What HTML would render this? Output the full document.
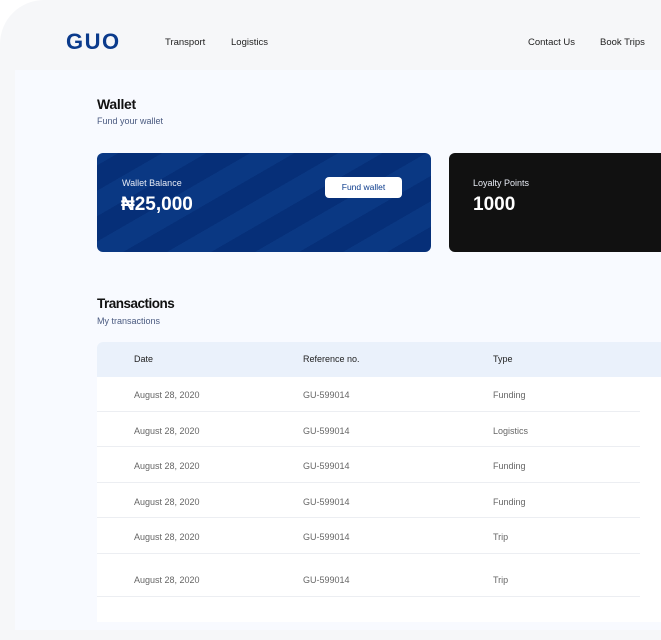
<!DOCTYPE html>
<html><head><style>
*{margin:0;padding:0;box-sizing:border-box}
body{width:661px;height:606px;overflow:hidden;background:#fff;font-family:"Liberation Sans",sans-serif;position:relative}
.outer{position:absolute;left:0;top:0;width:700px;height:640px;background:#f6f7f9;border-top-left-radius:44px}
.main{position:absolute;left:15px;top:70px;width:660px;height:560px;background:#f8faff}
.abs{position:absolute;white-space:nowrap}
.logo{left:66px;top:29px;font-size:22px;font-weight:bold;color:#0b3b8c;letter-spacing:1.5px}
.nav{top:37px;font-size:9.5px;color:#222}
.card{position:absolute;top:153px;height:99px;border-radius:6px}
.blue{left:97px;width:334px;background:repeating-linear-gradient(-30deg,#062f78 0 22px,#0a3883 22px 44px)}
.black{left:449px;width:230px;background:#111}
.lbl{font-size:9px;color:#e8ecf5}
.big{font-size:19px;font-weight:bold;color:#fff}
.btn{left:228px;top:24px;width:77px;height:21px;background:#fff;border-radius:4px;font-size:8.5px;color:#0b3b8c;text-align:center;line-height:21px}
.table{position:absolute;left:97px;top:342px;width:600px;height:280px;background:#fff;border-top-left-radius:6px}
.head{position:absolute;left:0;top:0;width:600px;height:35px;background:#eaf1fb;border-top-left-radius:6px}
.cell{position:absolute;font-size:9px;color:#666}
.hc{color:#222}
.sep{position:absolute;left:0;width:543px;height:1px;background:#eceef2}
</style></head><body>
<div class="outer"></div>
<div class="main"></div>
<div class="abs logo">GUO</div>
<div class="abs nav" style="left:165px">Transport</div>
<div class="abs nav" style="left:231px">Logistics</div>
<div class="abs nav" style="left:528px">Contact Us</div>
<div class="abs nav" style="left:600px">Book Trips</div>
<div class="abs" style="left:97px;top:96px;font-size:14px;font-weight:bold;color:#111;letter-spacing:-0.3px">Wallet</div>
<div class="abs" style="left:97px;top:116px;font-size:9px;color:#4a5a80">Fund your wallet</div>
<div class="card blue">
 <div class="abs lbl" style="left:25px;top:25px">Wallet Balance</div>
 <div class="abs big" style="left:24px;top:41px">₦25,000</div>
 <div class="abs btn">Fund wallet</div>
</div>
<div class="card black">
 <div class="abs lbl" style="left:24px;top:25px">Loyalty Points</div>
 <div class="abs big" style="left:24px;top:41px">1000</div>
</div>
<div class="abs" style="left:97px;top:296px;font-size:13.5px;font-weight:bold;color:#111;letter-spacing:-0.5px">Transactions</div>
<div class="abs" style="left:97px;top:316px;font-size:9px;color:#4a5a80">My transactions</div>
<div class="table">
 <div class="head"></div>
 <div class="cell hc" style="left:37px;top:12px">Date</div>
 <div class="cell hc" style="left:206px;top:12px">Reference no.</div>
 <div class="cell hc" style="left:396px;top:12px">Type</div>
 <div class="cell" style="left:37px;top:48px">August 28, 2020</div><div class="cell" style="left:206px;top:48px">GU-599014</div><div class="cell" style="left:396px;top:48px">Funding</div>
 <div class="sep" style="top:69px"></div>
 <div class="cell" style="left:37px;top:84px">August 28, 2020</div><div class="cell" style="left:206px;top:84px">GU-599014</div><div class="cell" style="left:396px;top:84px">Logistics</div>
 <div class="sep" style="top:104px"></div>
 <div class="cell" style="left:37px;top:119px">August 28, 2020</div><div class="cell" style="left:206px;top:119px">GU-599014</div><div class="cell" style="left:396px;top:119px">Funding</div>
 <div class="sep" style="top:140px"></div>
 <div class="cell" style="left:37px;top:155px">August 28, 2020</div><div class="cell" style="left:206px;top:155px">GU-599014</div><div class="cell" style="left:396px;top:155px">Funding</div>
 <div class="sep" style="top:175px"></div>
 <div class="cell" style="left:37px;top:190px">August 28, 2020</div><div class="cell" style="left:206px;top:190px">GU-599014</div><div class="cell" style="left:396px;top:190px">Trip</div>
 <div class="sep" style="top:211px"></div>
 <div class="cell" style="left:37px;top:233px">August 28, 2020</div><div class="cell" style="left:206px;top:233px">GU-599014</div><div class="cell" style="left:396px;top:233px">Trip</div>
 <div class="sep" style="top:254px"></div>
</div>
</body></html>
